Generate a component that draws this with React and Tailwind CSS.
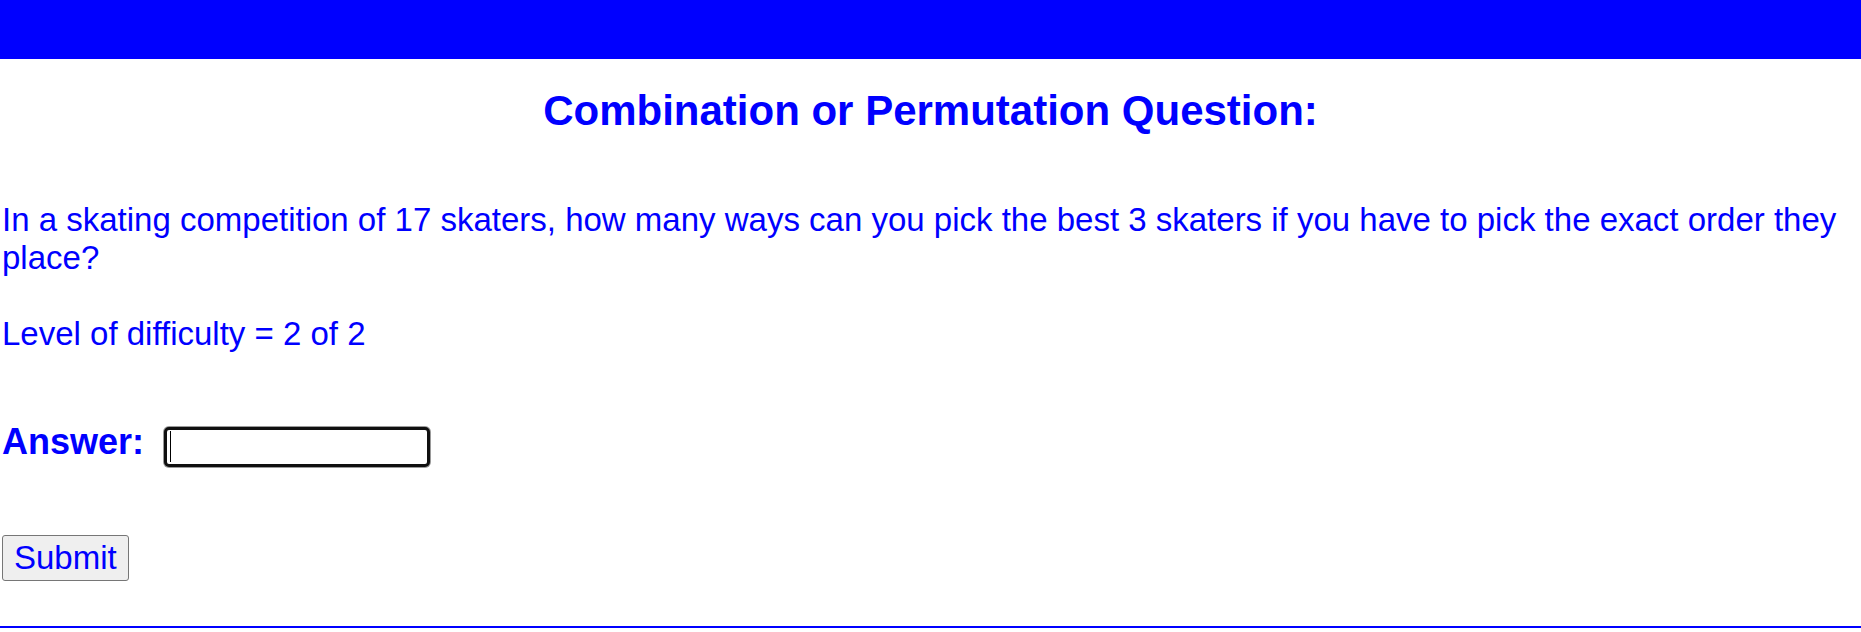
import React, { useState } from 'react';

const App = () => {
    const [answer, setAnswer] = useState('');

    const handleSubmit = (e) => {
        e.preventDefault();
    };

    return (
        <div className="min-h-screen bg-white text-[#0000ff] font-['Liberation_Sans',Arial,sans-serif]">
            <div className="h-[59px] bg-[#0000ff]" />

            <h2 className="mt-[28px] text-center text-[42px] leading-[48px] font-bold">
                Combination or Permutation Question:
            </h2>

            <form onSubmit={handleSubmit} className="px-[2px]">
                <p className="mt-[66px] text-[33px] leading-[38px]">
                    In a skating competition of 17 skaters, how many ways can you pick the best 3 skaters if you have to pick the exact order they place?
                </p>
                <p className="mt-[38px] text-[33px] leading-[38px]">Level of difficulty = 2 of 2</p>

                <div className="mt-[68px] flex items-start">
                    <label className="text-[36px] leading-[41px] font-bold">Answer:</label>
                    <div className="relative ml-[20px] mt-[6px]">
                        <input
                            type="text"
                            name="answer"
                            value={answer}
                            onChange={(e) => setAnswer(e.target.value)}
                            className="block w-[266px] h-[40px] border-[3px] border-[#101010] rounded-[5px] bg-white px-[6px] text-[33px] text-black outline-none shadow-[0_0_0_1px_#9a9a9a]"
                        />
                        {answer === '' && (
                            <span className="absolute left-[6px] top-[4px] w-[1px] h-[31px] bg-black" />
                        )}
                    </div>
                </div>

                <button
                    type="submit"
                    className="mt-[68px] block border border-[#767676] rounded-[3px] bg-[#efefef] pl-[11px] pr-[11px] pt-[3px] pb-[4px] text-[33px] leading-[37px] text-[#0000ff]"
                >
                    Submit
                </button>
            </form>

            <div className="mt-[45px] h-[2px] bg-[#0000ff]" />
        </div>
    );
};

export default App;
